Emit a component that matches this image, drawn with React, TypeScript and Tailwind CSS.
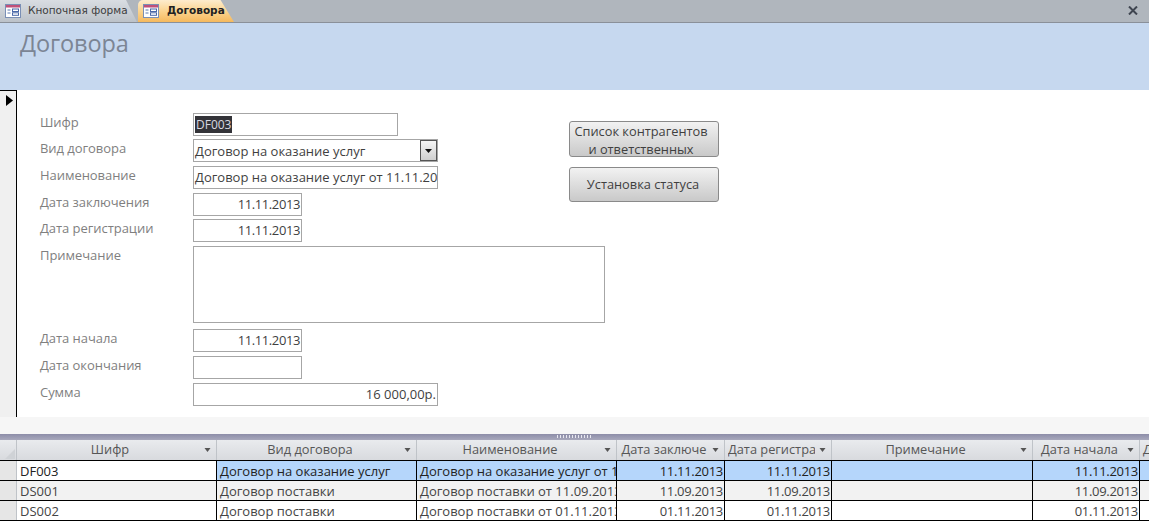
const FormIcon = () => (
  <svg width="16" height="14" viewBox="0 0 16 14" className="shrink-0">
    <rect x="0.5" y="0.5" width="15" height="13" fill="#fff" stroke="#7a8fb5" />
    <rect x="1" y="1" width="14" height="2.5" fill="#c0507a" />
    <path d="M2.5 6h3M2.5 9h3" stroke="#5a78b0" strokeWidth="1" />
    <rect x="7.5" y="5" width="6" height="2.5" fill="#fff" stroke="#4a68a8" />
    <rect x="7.5" y="8.8" width="6" height="2.5" fill="#fff" stroke="#4a68a8" />
  </svg>
);

const Caret = () => (
  <svg width="7" height="4" viewBox="0 0 7 4" className="shrink-0">
    <path d="M0.5 0h6L3.5 4z" fill="#555" />
  </svg>
);

const labelCls = "w-[176px] shrink-0 pl-[23px] text-[#7f7f7f] text-[13px] leading-[18px] tracking-[-0.05px]";
const inputCls = "h-[23px] shrink-0 border border-[#a6a6a6] bg-white text-[#3f3f3f] text-[13px] leading-[20px] px-[1px] overflow-hidden whitespace-nowrap";
const dateCls = "text-right tracking-[-0.4px]";

function Row({ label, mb, children }: { label: string; mb: string; children: React.ReactNode }) {
  return (
    <div className={`flex items-start ${mb}`}>
      <div className={labelCls}>{label}</div>
      {children}
    </div>
  );
}

const cols = [
  { title: "Шифр", w: "w-[200px]" },
  { title: "Вид договора", w: "w-[200px]" },
  { title: "Наименование", w: "w-[200px]" },
  { title: "Дата заключе", w: "w-[108px]" },
  { title: "Дата регистра", w: "w-[107px]" },
  { title: "Примечание", w: "w-[201px]" },
  { title: "Дата начала", w: "w-[107px]" },
];

const rows = [
  ["DF003", "Договор на оказание услуг", "Договор на оказание услуг от 11.11.2013", "11.11.2013", "11.11.2013", "", "11.11.2013"],
  ["DS001", "Договор поставки", "Договор поставки от 11.09.2013", "11.09.2013", "11.09.2013", "", "11.09.2013"],
  ["DS002", "Договор поставки", "Договор поставки от 01.11.2013", "01.11.2013", "01.11.2013", "", "01.11.2013"],
];

const rowBg = ["bg-white", "bg-[#f2f2f2]", "bg-white"];

export default function App() {
  return (
    <div className="w-[1157px] h-[521px] overflow-hidden bg-white" style={{ fontFamily: '"Open Sans", "Noto Sans", sans-serif' }}>
      <div className="w-[1149px] h-full flex flex-col">
        {/* Tabs */}
        <div className="h-[23px] shrink-0 bg-[#b0b6bd] border-b border-[#8a9099] flex items-end relative">
          <div className="h-[22px] w-[137px] bg-gradient-to-b from-[#d9dde2] to-[#bcc2c9] flex items-center gap-[7px] pl-[5px] rounded-tr-[6px] [clip-path:polygon(0_0,92%_0,100%_100%,0_100%)]">
            <FormIcon />
            <span className="text-[10.5px] text-[#3c3c3c] whitespace-nowrap" style={{ fontFamily: '"DejaVu Sans", sans-serif' }}>Кнопочная форма</span>
          </div>
          <div className="h-[22px] w-[96px] bg-gradient-to-b from-[#fdeccd] via-[#fbd48f] to-[#f6b95c] flex items-center gap-[8px] pl-[5px] ml-[1px] rounded-tl-[5px] [clip-path:polygon(0_0,86%_0,100%_100%,0_100%)]">
            <FormIcon />
            <span className="text-[10.5px] text-[#222] font-bold whitespace-nowrap" style={{ fontFamily: '"DejaVu Sans", sans-serif' }}>Договора</span>
          </div>
          <svg className="absolute right-[11px] top-[6px]" width="10" height="9" viewBox="0 0 10 9">
            <path d="M1 0.5l8 8M9 0.5l-8 8" stroke="#3f4550" strokeWidth="2" />
          </svg>
        </div>

        {/* Form header */}
        <div className="h-[67px] shrink-0 bg-[#c6d8ef] pl-[20px] pt-[4px]">
          <div className="text-[23.5px] leading-[33px] text-[#7c8594] tracking-[-0.1px]">Договора</div>
        </div>

        {/* Form body */}
        <div className="h-[327px] shrink-0 flex">
          <div className="w-[17px] shrink-0 bg-[#f0f0f0] border-r border-t border-black pt-[4px] pl-[6px]">
            <svg width="7" height="11" viewBox="0 0 7 11"><path d="M0 0l7 5.5L0 11z" fill="#000" /></svg>
          </div>
          <div className="flex-1 flex pt-[23px]">
            <div className="w-[552px] shrink-0">
              <Row label="Шифр" mb="mb-[3px]">
                <div className={`${inputCls} w-[205px]`}>
                  <span className="bg-[#333338] text-[#d8d8e0] px-[1px]" style={{ fontSize: 12 }}>DF003</span>
                </div>
              </Row>
              <Row label="Вид договора" mb="mb-[4px]">
                <div className={`${inputCls} w-[245px] flex justify-between items-center pr-0`}>
                  <span>Договор на оказание услуг</span>
                  <div className="w-[17px] h-[21px] border border-[#555] bg-gradient-to-b from-[#f5f5f5] to-[#cfcfcf] flex items-center justify-center">
                    <svg width="7" height="4" viewBox="0 0 7 4"><path d="M0 0h7L3.5 4z" fill="#111" /></svg>
                  </div>
                </div>
              </Row>
              <Row label="Наименование" mb="mb-[4px]">
                <div className={`${inputCls} w-[245px]`}>Договор на оказание услуг от 11.11.20</div>
              </Row>
              <Row label="Дата заключения" mb="mb-[3px]">
                <div className={`${inputCls} w-[109px] ${dateCls}`}>11.11.2013</div>
              </Row>
              <Row label="Дата регистрации" mb="mb-[4px]">
                <div className={`${inputCls} w-[109px] ${dateCls}`}>11.11.2013</div>
              </Row>
              <Row label="Примечание" mb="mb-[6px]">
                <div className="w-[412px] h-[77px] shrink-0 border border-[#a6a6a6] bg-white" />
              </Row>
              <Row label="Дата начала" mb="mb-[4px]">
                <div className={`${inputCls} w-[109px] ${dateCls}`}>11.11.2013</div>
              </Row>
              <Row label="Дата окончания" mb="mb-[4px]">
                <div className={`${inputCls} w-[109px]`} />
              </Row>
              <Row label="Сумма" mb="">
                <div className={`${inputCls} w-[245px] text-right`}>16 000,00р.</div>
              </Row>
            </div>
            <div className="w-[150px] pt-[8px] flex flex-col gap-[10px]">
              <button className="h-[36px] border border-[#8a8a8a] rounded-[3px] pr-[6px] bg-gradient-to-b from-[#f2f2f2] to-[#c9c9c9] text-[#3f3f3f] text-[12.8px] leading-[18px] whitespace-nowrap">
                Список контрагентов<br />и ответственных
              </button>
              <button className="h-[35px] border border-[#8a8a8a] rounded-[3px] pr-[2px] bg-gradient-to-b from-[#f2f2f2] to-[#c9c9c9] text-[#3f3f3f] text-[12.8px]">
                Установка статуса
              </button>
            </div>
          </div>
        </div>

        {/* Band */}
        <div className="h-[17px] shrink-0 bg-[#f6f6f6]" />

        {/* Splitter */}
        <div className="h-[6px] shrink-0 bg-gradient-to-b from-[#8d8da8] to-[#a8a8bc] flex items-start justify-center">
          <div className="w-[36px] h-[3px] mt-[1px] [background-image:repeating-linear-gradient(90deg,#e8e8f0_0_1px,transparent_1px_3px)]" />
        </div>

        {/* Datasheet */}
        <div className="flex-1 overflow-hidden text-[13px]">
          <div className="flex h-[21px] bg-gradient-to-b from-[#e9ebee] to-[#d8dade] border-b border-black">
            <div className="w-[17px] shrink-0 border-r border-[#bfc3c8] flex items-end justify-end">
              <svg width="12" height="12" viewBox="0 0 12 12"><path d="M11 1v10H1z" fill="#cfd2d6" /></svg>
            </div>
            {cols.map((c) => (
              <div key={c.title} className={`${c.w} shrink-0 border-r border-[#bfc3c8] flex items-center gap-[4px] pl-[3px] pr-[5px] text-[#565656] text-[12.8px] overflow-hidden`}>
                <span className="flex-1 min-w-0 text-center whitespace-nowrap overflow-hidden">{c.title}</span>
                <Caret />
              </div>
            ))}
            <div className="w-[9px] pl-[3px] text-[#565656] overflow-hidden">Д</div>
          </div>
          {rows.map((r, i) => (
            <div key={r[0]} className="flex h-[20px] border-b border-black">
              <div className="w-[17px] shrink-0 bg-[#e6e6e6] border-r border-[#bfc3c8]" />
              {r.map((v, j) => (
                <div
                  key={j}
                  className={`${cols[j].w} shrink-0 border-r border-black px-[3px] leading-[21px] whitespace-nowrap overflow-hidden ${j >= 3 ? "text-right pr-[1px] tracking-[-0.3px]" : ""} ${i === 0 && j > 0 ? "bg-[#b5d6fb] text-[#1f2a38]" : rowBg[i]} ${i === 0 ? "text-[#222]" : "text-[#444]"}`}
                >
                  {v}
                </div>
              ))}
              <div className={`flex-1 ${i === 0 ? "bg-[#b5d6fb]" : rowBg[i]}`} />
            </div>
          ))}
        </div>
      </div>
    </div>
  );
}
